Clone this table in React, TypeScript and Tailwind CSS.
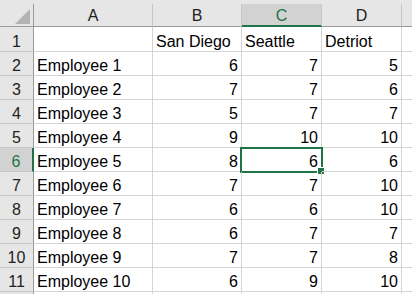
const cols = "grid grid-cols-[34px_119px_89px_80px_80px_1fr]";

const rows: (string | number)[][] = [
  ["", "San Diego", "Seattle", "Detriot"],
  ["Employee 1", 6, 7, 5],
  ["Employee 2", 7, 7, 6],
  ["Employee 3", 5, 7, 7],
  ["Employee 4", 9, 10, 10],
  ["Employee 5", 8, 6, 6],
  ["Employee 6", 7, 7, 10],
  ["Employee 7", 6, 6, 10],
  ["Employee 8", 6, 7, 7],
  ["Employee 9", 7, 7, 8],
  ["Employee 10", 6, 9, 10],
];

const headers = ["A", "B", "C", "D"];

function ColHeader({ label, active }: { label: string; active?: boolean }) {
  return (
    <div
      className={
        active
          ? "flex h-[23px] items-end justify-center border-r border-b-2 border-r-[#c6c6c6] border-b-[#217346] bg-[#d2d2d2] text-[#217346]"
          : "flex h-[23px] items-end justify-center border-r border-b border-r-[#c6c6c6] border-b-[#9b9b9b] pb-[1px] text-[#222]"
      }
    >
      <span className="leading-[18px]">{label}</span>
    </div>
  );
}

function RowHeader({ n, tall, active }: { n: number; tall?: boolean; active?: boolean }) {
  return (
    <div
      className={
        (tall ? "h-[25px] " : "h-[24px] ") +
        (active
          ? "flex items-end justify-center border-b border-r-2 border-b-[#c6c6c6] border-r-[#217346] bg-[#d2d2d2] text-[#217346]"
          : "flex items-end justify-center border-b border-r border-b-[#c6c6c6] border-r-[#9b9b9b] bg-[#e6e6e6] text-[#222]")
      }
    >
      <span className="leading-[18px]">{n}</span>
    </div>
  );
}

function Cell({ value, selected }: { value: string | number; selected?: boolean }) {
  const isNum = typeof value === "number";
  return (
    <div
      className={
        "relative flex items-end border-r border-b border-[#d4d4d4] px-[3px] " +
        (isNum ? "justify-end" : "justify-start")
      }
    >
      <span className="leading-[18px] whitespace-nowrap">{value}</span>
      {selected && (
        <>
          <div className="pointer-events-none absolute -left-[2px] -top-[1px] h-[26px] w-[83px] border-2 border-[#217346]" />
          <div className="absolute left-[75px] top-[19px] h-[8px] w-[8px] border border-white bg-[#217346]" />
        </>
      )}
    </div>
  );
}

export default function App() {
  return (
    <div className="h-[294px] w-[412px] overflow-hidden bg-white font-['Liberation_Sans',Arial,sans-serif] text-[16px] text-black">
      <div className={cols + " bg-[#e6e6e6] pt-[4px]"}>
        <div className="relative h-[23px] border-r border-b border-r-[#9b9b9b] border-b-[#9b9b9b]">
          <svg className="absolute left-0 top-0" width="33" height="22" viewBox="0 0 33 22">
            <polygon points="15,20 30,20 30,5" fill="#b4b4b4" />
          </svg>
        </div>
        {headers.map((h) => (
          <ColHeader key={h} label={h} active={h === "C"} />
        ))}
        <div className="h-[23px] border-b border-b-[#9b9b9b]" />
      </div>

      {rows.map((r, i) => (
        <div key={i} className={cols + (i === 0 ? " h-[25px]" : " h-[24px]")}>
          <RowHeader n={i + 1} tall={i === 0} active={i === 5} />
          {r.map((v, j) => (
            <Cell key={j} value={v} selected={i === 5 && j === 2} />
          ))}
          <div className="border-b border-[#d4d4d4]" />
        </div>
      ))}

      <div className={cols + " h-[24px]"}>
        <div className="border-r border-r-[#9b9b9b] bg-[#e6e6e6]" />
        <div className="border-r border-[#d4d4d4]" />
        <div className="border-r border-[#d4d4d4]" />
        <div className="border-r border-[#d4d4d4]" />
        <div className="border-r border-[#d4d4d4]" />
        <div />
      </div>
    </div>
  );
}
